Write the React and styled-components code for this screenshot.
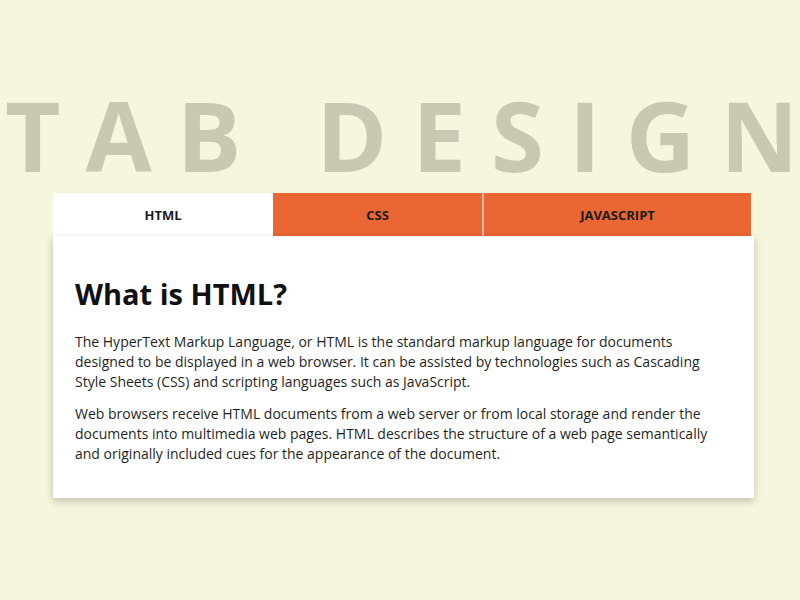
import React, { useState } from 'react';
import styled, { createGlobalStyle } from 'styled-components';

const GlobalStyle = createGlobalStyle`
  html, body {
    margin: 0;
    padding: 0;
    background: #f6f5dd;
  }
  body {
    font-family: "Open Sans", "Liberation Sans", sans-serif;
  }
`;

const Page = styled.div`
  width: 800px;
  height: 600px;
  overflow: hidden;
  display: flex;
  flex-direction: column;
  align-items: flex-start;
  background: #f6f5dd;
`;

const Title = styled.h1`
  margin: 80px 0 0 5px;
  font-family: "Open Sans", sans-serif;
  font-weight: 700;
  font-size: 96px;
  line-height: 110px;
  letter-spacing: 25px;
  color: #c9c8b3;
  white-space: nowrap;
`;

const Card = styled.div`
  margin: 3px 0 0 53px;
  width: 701px;
  display: flex;
  flex-direction: column;
`;

const TabBar = styled.div`
  display: flex;
  width: 698px;
  height: 43px;
`;

const Tab = styled.button`
  flex: ${p => p.grow};
  border: none;
  margin: 0;
  padding: 0;
  border-left: ${p => (p.divider ? '2px solid #f2b89e' : 'none')};
  background: ${p => (p.active ? '#ffffff' : '#ea6633')};
  color: #1c1c1c;
  font-family: "Open Sans", sans-serif;
  font-weight: 700;
  font-size: 13px;
  cursor: pointer;
`;

const Panel = styled.div`
  background: #ffffff;
  padding: 38px 22px 22px 22px;
  box-shadow: 0 3px 8px rgba(0, 0, 0, 0.22);
`;

const Heading = styled.h2`
  margin: 0 0 18px 0;
  font-family: "Open Sans", sans-serif;
  font-weight: 700;
  font-size: 29px;
  line-height: 40px;
  color: #111111;
`;

const Text = styled.p`
  margin: 0 0 12px 0;
  width: 650px;
  font-family: "Open Sans", sans-serif;
  font-size: 14px;
  line-height: 20px;
  color: #1f1f1f;
`;

const tabs = [
  { name: 'HTML', grow: 220 },
  { name: 'CSS', grow: 209 },
  { name: 'JAVASCRIPT', grow: 267 },
];

export default function App() {
  const [active, setActive] = useState(0);

  return (
    <Page>
      <GlobalStyle />
      <Title>TAB DESIGN</Title>
      <Card>
        <TabBar>
          {tabs.map((t, i) => (
            <Tab
              key={t.name}
              grow={t.grow}
              active={i === active}
              divider={i === 2}
              onClick={() => setActive(i)}
            >
              {t.name}
            </Tab>
          ))}
        </TabBar>
        <Panel>
          <Heading>What is HTML?</Heading>
          <Text>
            The HyperText Markup Language, or HTML is the standard markup language for documents
            designed to be displayed in a web browser. It can be assisted by technologies such as
            Cascading Style Sheets (CSS) and scripting languages such as JavaScript.
          </Text>
          <Text>
            Web browsers receive HTML documents from a web server or from local storage and render
            the documents into multimedia web pages. HTML describes the structure of a web page
            semantically and originally included cues for the appearance of the document.
          </Text>
        </Panel>
      </Card>
    </Page>
  );
}
